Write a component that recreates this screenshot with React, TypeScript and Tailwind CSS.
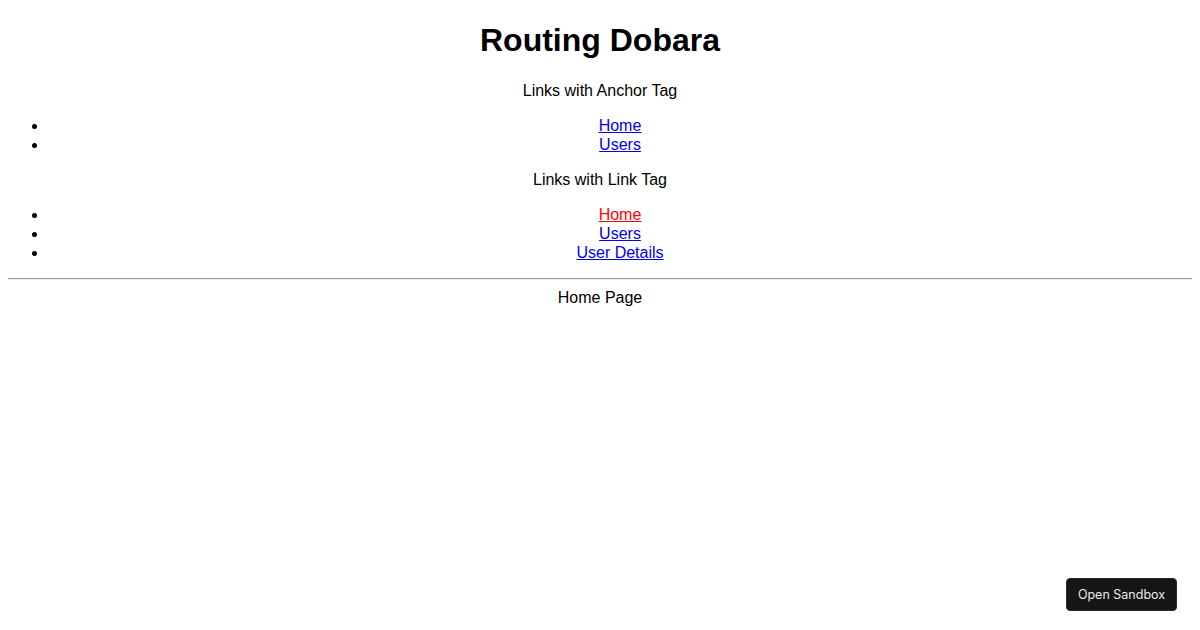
export default function App() {
  const anchorLinks = ["Home", "Users"];
  const linkTags = [
    { label: "Home", active: true },
    { label: "Users", active: false },
    { label: "User Details", active: false },
  ];

  return (
    <div className="min-h-[630px] bg-white px-2 text-center font-['Liberation_Sans',Arimo,Arial,sans-serif] text-base leading-[19px] text-black">
      <div className="flow-root">
        <h1 className="mt-[21.44px] mb-[21.44px] text-[32px] font-bold leading-[38px]">
          Routing Dobara
        </h1>
        <p className="my-4">Links with Anchor Tag</p>
        <ul className="my-4 list-disc pl-10">
          {anchorLinks.map((l) => (
            <li key={l}>
              <a href="#" className="text-[#0000ee] underline">
                {l}
              </a>
            </li>
          ))}
        </ul>
        <p className="my-4">Links with Link Tag</p>
        <ul className="my-4 list-disc pl-10">
          {linkTags.map((l) => (
            <li key={l.label}>
              <a
                href="#"
                className={l.active ? "text-[#ff0000] underline" : "text-[#0000ee] underline"}
              >
                {l.label}
              </a>
            </li>
          ))}
        </ul>
        <hr className="my-2 h-0 border-t border-b border-t-[#9a9a9a] border-b-[#eeeeee]" />
        <div>Home Page</div>
      </div>

      <button className="fixed right-[23px] bottom-[19px] h-[33px] w-[111px] rounded-[4px] border border-[#2a2a2a] bg-[#151515] font-['Inter',sans-serif] text-[12.5px] leading-[normal] text-[#ececec]">
        Open Sandbox
      </button>
    </div>
  );
}
